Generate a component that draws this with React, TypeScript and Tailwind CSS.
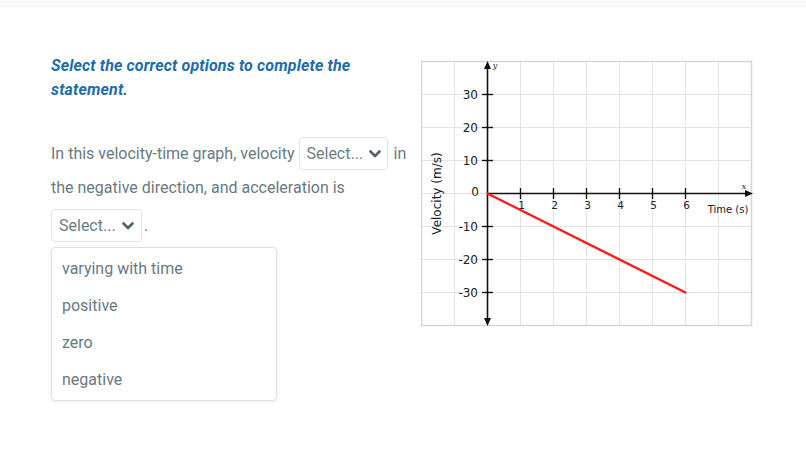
import React from "react";

const Chevron = () => (
  <svg width="12" height="8" viewBox="0 0 12 8" className="ml-[6px]">
    <polyline points="1.5,1.5 6,6 10.5,1.5" fill="none" stroke="#51636c" strokeWidth="2.6" strokeLinecap="round" strokeLinejoin="round" />
  </svg>
);

const SelectBox = ({ w }: { w: string }) => (
  <span className={`inline-flex h-[33px] items-center rounded-[4px] border border-[#e1e5e7] bg-white pl-[7px] ${w}`}>
    <span className="text-[#6b7d87]">Select...</span>
    <Chevron />
  </span>
);

const options = ["varying with time", "positive", "zero", "negative"];

// Grid coordinates in svg space: box 0.5..330.5 x 6.5..270.5, cells of 33px
const Graph = () => {
  const cols = Array.from({ length: 11 }, (_, i) => 0.5 + i * 33);
  const rows = Array.from({ length: 9 }, (_, i) => 6.5 + i * 33);
  const ox = 66.5;
  const oy = 138.5;
  const yLabels = [
    { v: "30", y: 39.5 },
    { v: "20", y: 72.5 },
    { v: "10", y: 105.5 },
    { v: "-10", y: 171.5 },
    { v: "-20", y: 204.5 },
    { v: "-30", y: 237.5 },
  ];
  return (
    <svg width="340" height="280" viewBox="0 0 340 280" className="block">
      {cols.map((x) => (
        <line key={"c" + x} x1={x} y1={6.5} x2={x} y2={270.5} stroke="#e3e3e3" strokeWidth="1" />
      ))}
      {rows.map((y) => (
        <line key={"r" + y} x1={0.5} y1={y} x2={330.5} y2={y} stroke="#e3e3e3" strokeWidth="1" />
      ))}
      <rect x="0.5" y="6.5" width="330" height="264" fill="none" stroke="#d6d6d6" strokeWidth="1.5" />

      {/* axes */}
      <line x1={ox} y1={12} x2={ox} y2={265} stroke="#111" strokeWidth="1.6" />
      <polygon points={`${ox},6 ${ox - 3.5},14 ${ox + 3.5},14`} fill="#111" />
      <polygon points={`${ox},271 ${ox - 3.5},263 ${ox + 3.5},263`} fill="#111" />
      <line x1={ox} y1={oy} x2={325} y2={oy} stroke="#111" strokeWidth="1.6" />
      <polygon points={`332,${oy} 324,${oy - 3.5} 324,${oy + 3.5}`} fill="#111" />

      {yLabels.map((l) => (
        <g key={l.v}>
          <line x1={ox - 5.5} y1={l.y} x2={ox + 5.5} y2={l.y} stroke="#111" strokeWidth="1.4" />
          <text x={57} y={l.y + 4.5} textAnchor="end" fontSize="12" fill="#222" fontFamily="'DejaVu Sans', sans-serif">
            {l.v}
          </text>
        </g>
      ))}
      <text x={58} y={oy + 2} textAnchor="end" fontSize="12" fill="#222" fontFamily="'DejaVu Sans', sans-serif">
        0
      </text>

      {[1, 2, 3, 4, 5, 6].map((n) => {
        const x = ox + n * 33;
        return (
          <g key={n}>
            <line x1={x} y1={oy - 5.5} x2={x} y2={oy + 5.5} stroke="#111" strokeWidth="1.4" />
            <text x={x + 1} y={oy + 15} textAnchor="middle" fontSize="10.5" fill="#222" fontFamily="'DejaVu Sans', sans-serif">
              {n}
            </text>
          </g>
        );
      })}

      <text x={307} y={oy + 19} textAnchor="middle" fontSize="10" fill="#222" fontFamily="'DejaVu Sans', sans-serif">
        Time (s)
      </text>
      <text x={323} y={oy - 5} textAnchor="middle" fontSize="8" fontStyle="italic" fill="#222" fontFamily="'DejaVu Serif', serif">
        x
      </text>
      <text x={74} y={13} textAnchor="middle" fontSize="8" fontStyle="italic" fill="#222" fontFamily="'DejaVu Serif', serif">
        y
      </text>
      <text
        x={16}
        y={oy}
        textAnchor="middle"
        fontSize="12"
        fill="#222"
        fontFamily="'DejaVu Sans', sans-serif"
        transform={`rotate(-90 16 ${oy}) translate(0 4)`}
      >
        Velocity (m/s)
      </text>

      <line x1={ox} y1={oy} x2={264.5} y2={237.5} stroke="#ff1a1a" strokeWidth="2.4" strokeLinecap="round" />
    </svg>
  );
};

const App = () => {
  return (
    <div className="min-h-[473px] w-[806px] bg-white font-['Roboto',sans-serif]">
      <div className="h-[7px] bg-[#f9fbfb]" />
      <div className="flex pt-[47px] pl-[51px]">
        <div className="w-[360px]">
          <h2 className="text-[16px] leading-[24px] font-bold italic tracking-[0.15px] text-[#1b6ea8]">
            Select the correct options to complete the
            <br />
            statement.
          </h2>

          <div className="mt-[35px] text-[16px] text-[#687a84]">
            <div className="flex h-[33px] items-center whitespace-nowrap">
              <span>In this velocity-time graph, velocity</span>
              <span className="ml-[4px]">
                <SelectBox w="w-[89px]" />
              </span>
              <span className="ml-[6px]">in</span>
            </div>
            <div className="flex h-[36px] items-center whitespace-nowrap">
              the negative direction, and acceleration is
            </div>
            <div className="mt-[3px] flex h-[33px] items-center">
              <SelectBox w="w-[91px]" />
              <span className="ml-[2px]">.</span>
            </div>

            <div className="mt-[5px] w-[226px] rounded-[4px] border border-[#dfe2e4] bg-white py-[2px] shadow-[0_1px_4px_rgba(0,0,0,0.08)]">
              {options.map((o) => (
                <div key={o} className="flex h-[37px] items-center px-[10px] text-[#687a84]">
                  {o}
                </div>
              ))}
            </div>
          </div>
        </div>

        <div className="ml-[10px] mt-[1px]">
          <Graph />
        </div>
      </div>
    </div>
  );
};

export default App;
